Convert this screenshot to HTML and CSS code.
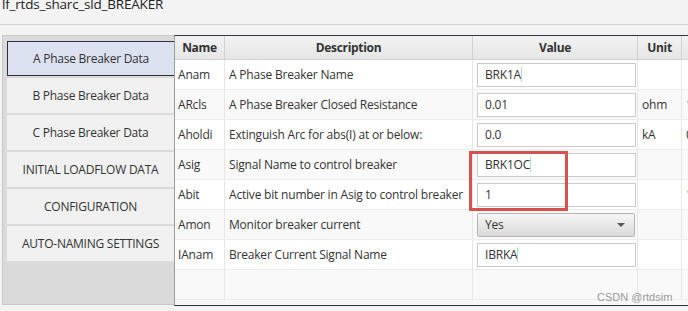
FILE: index.html
```html
<!DOCTYPE html>
<html>
<head>
<meta charset="utf-8">
<link rel="stylesheet" href="styles.css">
</head>
<body>
<div class="title"><span class="title-text">lf_rtds_sharc_sld_BREAKER</span></div>
<div class="main">
  <div class="side">
    <div class="btn active">A Phase Breaker Data</div>
    <div class="btn">B Phase Breaker Data</div>
    <div class="btn">C Phase Breaker Data</div>
    <div class="btn">INITIAL LOADFLOW DATA</div>
    <div class="btn">CONFIGURATION</div>
    <div class="btn">AUTO-NAMING SETTINGS</div>
  </div>
  <div class="table">
    <div class="row head">
      <div class="c c-name">Name</div>
      <div class="c c-desc">Description</div>
      <div class="c c-val">Value</div>
      <div class="c c-unit">Unit</div>
      <div class="c c-x"></div>
    </div>
    <div class="row">
      <div class="c c-name">Anam</div>
      <div class="c c-desc">A Phase Breaker Name</div>
      <div class="c c-val"><div class="field">BRK1A<span class="caret"></span></div></div>
      <div class="c c-unit"></div>
      <div class="c c-x"></div>
    </div>
    <div class="row alt">
      <div class="c c-name">ARcls</div>
      <div class="c c-desc">A Phase Breaker Closed Resistance</div>
      <div class="c c-val"><div class="field">0.01</div></div>
      <div class="c c-unit">ohm</div>
      <div class="c c-x">1</div>
    </div>
    <div class="row">
      <div class="c c-name">Aholdi</div>
      <div class="c c-desc">Extinguish Arc for abs(I) at or below:</div>
      <div class="c c-val"><div class="field">0.0</div></div>
      <div class="c c-unit">kA</div>
      <div class="c c-x">0</div>
    </div>
    <div class="row alt">
      <div class="c c-name">Asig</div>
      <div class="c c-desc">Signal Name to control breaker</div>
      <div class="c c-val"><div class="field">BRK1OC<span class="caret"></span></div></div>
      <div class="c c-unit"></div>
      <div class="c c-x"></div>
    </div>
    <div class="row">
      <div class="c c-name">Abit</div>
      <div class="c c-desc">Active bit number in Asig to control breaker</div>
      <div class="c c-val"><div class="field">1</div></div>
      <div class="c c-unit"></div>
      <div class="c c-x">1</div>
    </div>
    <div class="row alt">
      <div class="c c-name">Amon</div>
      <div class="c c-desc">Monitor breaker current</div>
      <div class="c c-val"><div class="combo"><span>Yes</span><span class="arrow"></span></div></div>
      <div class="c c-unit"></div>
      <div class="c c-x"></div>
    </div>
    <div class="row">
      <div class="c c-name">IAnam</div>
      <div class="c c-desc">Breaker Current Signal Name</div>
      <div class="c c-val"><div class="field">IBRKA<span class="caret"></span></div></div>
      <div class="c c-unit"></div>
      <div class="c c-x"></div>
    </div>
    <div class="row alt">
      <div class="c c-name"></div>
      <div class="c c-desc"></div>
      <div class="c c-val"></div>
      <div class="c c-unit"></div>
      <div class="c c-x"></div>
    </div>
    <div class="highlight"></div>
    <div class="watermark">CSDN @rtdsim</div>
  </div>
</div>
</body>
</html>
```
FILE: styles.css
```css
html, body {
  margin: 0;
  padding: 0;
  background: #f3f3f3;
  width: 688px;
  height: 311px;
  overflow: hidden;
  font-family: "Open Sans", "Noto Sans", sans-serif;
  color: #333;
}
.title {
  height: 24px;
  border-bottom: 1px solid #d3d3d3;
  overflow: hidden;
  padding-left: 2px;
}
.title-text {
  display: block;
  font-size: 13.5px;
  line-height: 14px;
  letter-spacing: -0.2px;
  margin-top: -3px;
  color: #222;
}
.main {
  display: flex;
  padding-top: 10px;
}
.side {
  margin-left: 2px;
  width: 172px;
  height: 270px;
  background: #dadada;
  border: 1px solid #c8c8c8;
  border-right: none;
  padding: 5px 0 0 4px;
  box-sizing: border-box;
  display: flex;
  flex-direction: column;
  gap: 2px;
  flex-shrink: 0;
}
.btn {
  height: 35px;
  background: #f0f0f0;
  display: flex;
  align-items: center;
  justify-content: center;
  font-size: 12px;
  letter-spacing: -0.25px;
  color: #333;
  box-sizing: border-box;
}
.btn.active {
  background: #dbe1ee;
  border: 1px solid #2e3040;
  border-right: none;
}
.table {
  position: relative;
  flex: 1;
  height: 271px;
  border-top: 1px solid #30333f;
  border-bottom: 1px solid #30333f;
  border-left: 1px solid #9a9a9a;
  background: #f7f7f7;
  overflow: hidden;
  box-sizing: border-box;
  font-size: 12px;
  letter-spacing: -0.2px;
}
.row {
  display: flex;
  height: 30px;
  background: #fff;
  border-bottom: 1px solid #ececec;
  box-sizing: border-box;
}
.row.alt {
  background: #f9f9f9;
}
.row.head {
  height: 24px;
  background: linear-gradient(#f2f2f2, #e6e6e6);
  border-bottom: 1px solid #d0d0d0;
  font-weight: bold;
  font-size: 12px;
  letter-spacing: -0.3px;
}
.c {
  flex-shrink: 0;
  display: flex;
  align-items: center;
  border-right: 1px solid #e6e6e6;
  box-sizing: border-box;
  padding-left: 3px;
  white-space: nowrap;
  overflow: hidden;
}
.head .c {
  justify-content: center;
  padding-left: 0;
  border-right: 1px solid #d2d2d2;
}
.c-name { width: 50px; }
.c-desc { width: 248px; padding-left: 4px; }
.c-val { width: 165px; padding-left: 4px; }
.c-unit { width: 44px; padding-left: 4px; }
.c-x { width: 60px; padding-left: 4px; }
.field {
  width: 159px;
  height: 24px;
  box-sizing: border-box;
  border: 1px solid #c9c9c9;
  background: #fff;
  display: flex;
  align-items: center;
  padding-left: 7px;
}
.caret {
  display: inline-block;
  width: 1px;
  height: 15px;
  background: #a8ddd2;
}
.combo {
  width: 158px;
  height: 24px;
  box-sizing: border-box;
  border: 1px solid #b4b4b4;
  border-radius: 2px;
  background: linear-gradient(#f6f6f6, #dadada);
  display: flex;
  align-items: center;
  justify-content: space-between;
  padding: 0 9px 0 7px;
}
.arrow {
  width: 0;
  height: 0;
  border-left: 4px solid transparent;
  border-right: 4px solid transparent;
  border-top: 4px solid #555;
}
.highlight {
  position: absolute;
  left: 294px;
  top: 115px;
  width: 99px;
  height: 60px;
  box-sizing: border-box;
  border: 3px solid #d6524c;
}
.watermark {
  position: absolute;
  left: 422px;
  top: 255px;
  font-family: "Liberation Sans", sans-serif;
  font-size: 11px;
  letter-spacing: 0;
  color: #9a9a9a;
}
```
